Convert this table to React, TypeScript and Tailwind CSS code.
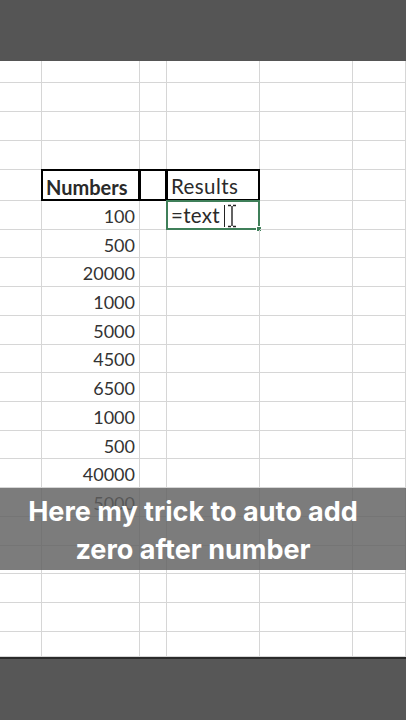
import React from "react";

const cols = [42, 98, 27, 93, 93, 53];
const rowHeights: number[] = [22, 29, 29, 29, 31, ...Array(15).fill(431 / 15), 25];
const HEADER = 4;
const numbers: Record<number, string> = {
  5: "100",
  6: "500",
  7: "20000",
  8: "1000",
  9: "5000",
  10: "4500",
  11: "6500",
  12: "1000",
  13: "500",
  14: "40000",
  15: "5000",
};

const cellFont = { fontFamily: "Lato, 'Open Sans', sans-serif" };

function Cell({ r, c }: { r: number; c: number }) {
  const isHeader = r === HEADER && c >= 1 && c <= 3;
  const base = "relative border-r border-b border-[#d6d6d6] overflow-visible";
  if (isHeader) {
    return (
      <div className={base}>
        <div className="absolute -left-[1px] -top-[1px] -right-[1px] -bottom-[1px] border-[2px] border-black flex items-center pl-[3px] pt-[3px]">
          {c === 1 && (
            <span className="text-[20px] font-bold text-[#2a2a2a]" style={cellFont}>
              Numbers
            </span>
          )}
          {c === 3 && (
            <span className="text-[20.5px] text-[#2a2a2a] tracking-[0.4px]" style={cellFont}>
              Results
            </span>
          )}
        </div>
      </div>
    );
  }
  if (r === 5 && c === 3) {
    return (
      <div className={base}>
        <div className="absolute -left-[1px] -top-[1px] -right-[1px] -bottom-[1px] border-[2px] border-[#3f7f59] flex items-center pl-[3px] pt-[2px]">
          <span className="text-[20.5px] text-[#2a2a2a] tracking-[0.3px]" style={cellFont}>
            =text
          </span>
          <span className="ml-[4px] w-[1.5px] h-[22px] bg-[#222]" />
          <svg width="10" height="24" viewBox="0 0 10 24" className="ml-[2px]">
            <path d="M1 1.5 H4 M6 1.5 H9 M5 2 V22 M1 22.5 H4 M6 22.5 H9" stroke="#222" strokeWidth="1.4" fill="none" />
          </svg>
          <div className="absolute -right-[4px] -bottom-[4px] w-[6px] h-[6px] bg-[#3f7f59] border border-white" />
        </div>
      </div>
    );
  }
  if (c === 1 && numbers[r]) {
    return (
      <div className={base + " flex items-center justify-end pr-[4px] pt-[3px]"}>
        <span className="text-[18px] text-[#333333]" style={cellFont}>
          {numbers[r]}
        </span>
      </div>
    );
  }
  return <div className={base} />;
}

export default function App() {
  return (
    <div className="w-[406px] h-[720px] flex flex-col bg-white overflow-hidden">
      <div className="h-[61px] bg-[#555555] shrink-0" />
      <div className="relative h-[596px] shrink-0 overflow-hidden">
        <div
          className="grid"
          style={{
            gridTemplateColumns: cols.map((w) => `${w}px`).join(" "),
            gridTemplateRows: rowHeights.map((h) => `${h}px`).join(" "),
          }}
        >
          {rowHeights.map((_, r) => cols.map((__, c) => <Cell key={`${r}-${c}`} r={r} c={c} />))}
        </div>
        <div className="absolute left-0 right-0 top-[427px] h-[82px] bg-[rgba(95,95,95,0.82)] flex flex-col items-center justify-center pr-[20px]">
          <div
            className="text-white font-bold text-[27px] leading-[38px] text-center tracking-[0px] pt-[3px]"
            style={{ fontFamily: "Inter, Lato, sans-serif" }}
          >
            Here my trick to auto add
            <br />
            zero after number
          </div>
        </div>
      </div>
      <div className="flex-1 bg-[#575757] border-t-[2px] border-[#2a2a2a]" />
    </div>
  );
}
